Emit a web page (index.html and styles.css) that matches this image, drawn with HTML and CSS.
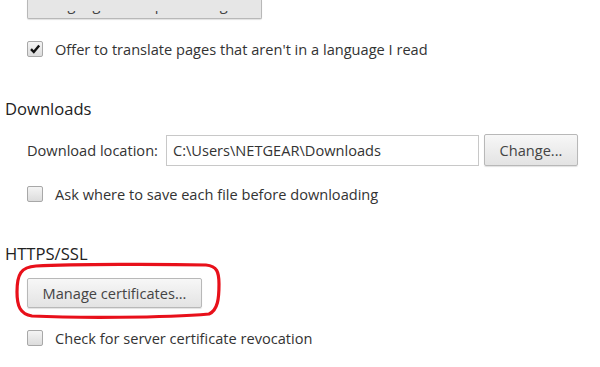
FILE: index.html
```html
<!DOCTYPE html>
<html lang="en">

<head>
  <meta charset="UTF-8">
  <meta name="viewport" content="width=device-width, initial-scale=1.0">
  <title>Settings</title>
  <link rel="stylesheet" href="styles.css">
</head>

<body>
  <div class="settings">
    <div class="section indent">
      <button class="btn btn-cut"><span class="cut-clip"><span class="cut-text">Language and input settings...</span></span></button>
      <label class="check-row first-check">
        <span class="box">
          <svg viewBox="0 0 12 12" width="12" height="12"><path d="M2 6.2 L4.8 9 L10.2 2.6" fill="none" stroke="#111" stroke-width="2.4"/></svg>
        </span>
        Offer to translate pages that aren't in a language I read
      </label>
    </div>

    <h3 class="heading">Downloads</h3>
    <div class="section indent">
      <div class="location-row">
        <span>Download location:</span>
        <div class="path">C:\Users\NETGEAR\Downloads</div>
        <button class="btn btn-change">Change...</button>
      </div>
      <label class="check-row ask-check">
        <span class="box"></span>
        Ask where to save each file before downloading
      </label>
    </div>

    <h3 class="heading">HTTPS/SSL</h3>
    <div class="section indent">
      <div class="marked">
        <button class="btn btn-certs">Manage certificates...</button>
        <svg class="ring" viewBox="0 0 208 58" width="208" height="58">
          <path d="M22 4 C60 2 150 2 192 3 C203 4 205 10 205 22 C205 36 204 48 195 52 C150 56 60 56 18 54 C6 52 3 44 3 30 C3 12 7 5 22 4 Z" fill="none" stroke="#e8101a" stroke-width="3.2"/>
        </svg>
      </div>
      <label class="check-row last-check">
        <span class="box"></span>
        Check for server certificate revocation
      </label>
    </div>
  </div>
</body>

</html>
```

FILE: styles.css
```css
body {
  margin: 0;
  background: #fff;
  font-family: "Open Sans", "Noto Sans", sans-serif;
  font-size: 14.6px;
  color: #333;
  overflow: hidden;
}

.settings {
  display: flex;
  flex-direction: column;
  padding-left: 5px;
}

.indent {
  padding-left: 22px;
}

.section {
  display: flex;
  flex-direction: column;
  align-items: flex-start;
}

.heading {
  margin: 40px 0 0;
  font-weight: normal;
  font-size: 16.6px;
  color: #222;
  line-height: 20px;
}

.btn {
  font-family: inherit;
  font-size: 14.6px;
  color: #444;
  background: linear-gradient(#f7f7f7, #e3e3e3);
  border: 1px solid #b8b8b8;
  border-radius: 2px;
  box-shadow: 0 1px 1px rgba(0, 0, 0, 0.12);
  padding: 0 12px;
  height: 30px;
}

.btn-cut {
  width: 235px;
  height: 19px;
  padding: 0;
  border-top: none;
  border-radius: 0 0 2px 2px;
  display: flex;
  justify-content: center;
  align-items: flex-start;
  background: #e6e6e6;
}

/* only the tails of the label peek out below the top edge of the shot */
.cut-clip {
  display: block;
  margin-top: 11px;
  height: 3px;
  overflow: hidden;
}

.cut-text {
  display: block;
  line-height: 20px;
  margin-top: -17px;
  white-space: nowrap;
}

.check-row {
  display: flex;
  align-items: center;
  gap: 12px;
  height: 20px;
}

.first-check {
  margin-top: 20px;
}

.ask-check {
  margin-top: 18px;
}

.last-check {
  margin-top: 20px;
}

.box {
  box-sizing: border-box;
  width: 16px;
  height: 16px;
  border: 1px solid #a8a8a8;
  border-radius: 2px;
  background: linear-gradient(#f4f4f4, #dcdcdc);
  display: flex;
  align-items: center;
  justify-content: center;
  flex: none;
}

.location-row {
  display: flex;
  align-items: center;
  margin-top: 15px;
  height: 32px;
}

.path {
  box-sizing: border-box;
  width: 313px;
  height: 31px;
  margin-left: 8px;
  border: 1px solid #c8c8c8;
  padding-left: 6px;
  display: flex;
  align-items: center;
}

.btn-change {
  width: 94px;
  height: 32px;
  margin-left: 5px;
}

.marked {
  position: relative;
  margin-top: 14px;
  height: 30px;
}

.btn-certs {
  width: 175px;
}

.ring {
  position: absolute;
  left: -13px;
  top: -16px;
}
```
